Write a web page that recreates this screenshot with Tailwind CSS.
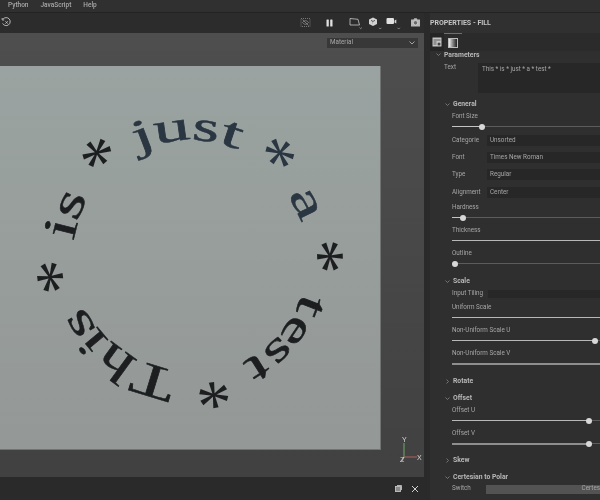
<!DOCTYPE html>
<html lang="en">
<head>
    <meta charset="UTF-8">
    <title>Properties - Fill</title>
    <script src="https://cdn.jsdelivr.net/npm/@tailwindcss/browser@4"></script>
</head>
<body class="w-[600px] h-[500px] overflow-hidden bg-[#2b2b2b] blur-[0.4px] font-['Roboto',sans-serif] text-[#b4b4b4]">

    <!-- Menu bar -->
    <div class="h-[13px] bg-[#303030] border-b border-[#232323] flex items-center gap-[12px] pl-[8px] text-[6.500px] text-[#a8a8a8] font-medium">
        <span>Python</span>
        <span>JavaScript</span>
        <span>Help</span>
    </div>

    <div class="flex h-[487px]">
        <!-- Viewport column -->
        <div class="w-[424px] flex flex-col shrink-0">
            <div class="h-[20px] bg-[#2c2c2c] flex items-center relative shrink-0">
                <svg class="absolute left-[1px] top-[4px]" width="11" height="11" viewBox="0 0 11 11" fill="none" stroke="#c4c4c4" stroke-width="0.9">
                    <path d="M2 2.2A4 4 0 1 1 1.6 6.4"/><path d="M1.2 1v2h2"/><path d="M4.5 4.3l2.2 2.3M6.7 4.3l-2.2 2.3"/>
                </svg>
                <svg class="absolute left-[300px] top-[4px]" width="11" height="11" viewBox="0 0 11 11" fill="none" stroke="#8a8a8a" stroke-width="0.8">
                    <rect x="1" y="1.5" width="9" height="8" stroke-dasharray="1 1"/><path d="M2.5 5.5c2-2.4 4-2.4 6 0-2 2.400-4 2.400-6 0zM2.500 2.500l6 6"/>
                </svg>
                <svg class="absolute left-[326px] top-[6px]" width="7" height="8" viewBox="0 0 7 8" fill="#e0e0e0">
                    <rect x="0.500" y="0.500" width="2.300" height="7" rx="0.500"/><rect x="4.200" y="0.500" width="2.300" height="7" rx="0.500"/>
                </svg>
                <svg class="absolute left-[349px] top-[4px]" width="14" height="13" viewBox="0 0 14 13" fill="none" stroke="#c8c8c8" stroke-width="0.8">
                    <path d="M1 1.500l8 .8 1.500 5.700H1z"/><path d="M10.500 10.500l1.200 1.200 1.200-1.200" stroke="#9a9a9a"/>
                </svg>
                <svg class="absolute left-[368px] top-[3px]" width="15" height="14" viewBox="0 0 15 14">
                    <path d="M1 3.500L5 1.500l4 2v4.500l-4 2-4-2z" fill="#d2d2d2"/><path d="M3 4l2 1 2-1v.800l-2 1v2h-.200v-2l-1.800-1z" fill="#3a3a3a"/><path d="M11 11.800l1.200 1.200 1.200-1.200" fill="none" stroke="#9a9a9a" stroke-width="0.800"/>
                </svg>
                <svg class="absolute left-[386px] top-[3px]" width="16" height="14" viewBox="0 0 16 14">
                    <rect x="0.500" y="2" width="7.500" height="6" rx="1" fill="#e0e0e0"/><path d="M8.500 4.500l1.800-1v4l-1.800-1z" fill="#d0d0d0"/><path d="M11.500 11.800l1.200 1.200 1.200-1.200" fill="none" stroke="#9a9a9a" stroke-width="0.800"/>
                </svg>
                <svg class="absolute left-[410px] top-[4px]" width="11" height="11" viewBox="0 0 11 11">
                    <path d="M1 2.500h2.500l.8-1.200h2.400l.8 1.200H10v7H1z" fill="#b8b8b8"/><circle cx="5.500" cy="5.800" r="2.200" fill="#6a6a6a" stroke="#e0e0e0" stroke-width="0.700"/>
                </svg>
            </div>

            <!-- Viewport -->
            <div class="h-[444px] bg-gradient-to-b from-[#4e4e4e] to-[#414141] relative shrink-0 overflow-hidden">
                <div class="absolute left-[327px] top-[5px] w-[91px] h-[10px] bg-[#383838] flex items-center justify-between pl-[3px] pr-[3px] text-[6.300px] text-[#a8a8a8]">
                    <span>Material</span>
                    <svg width="6" height="4" viewBox="0 0 6 4" fill="none" stroke="#c0c0c0" stroke-width="0.800"><path d="M.5.500l2.500 2.500L5.500.500"/></svg>
                </div>

                <!-- Canvas with lettering on a circle -->
                <div class="absolute left-0 top-[33px] w-[381px] h-[384px] bg-gradient-to-b from-[#9aa3a1] to-[#949896] border-b border-r border-[#707371]"></div>
                <svg class="absolute left-0 top-0" width="424" height="444" viewBox="0 33 424 444" font-family="'Liberation Serif', serif" font-size="43" stroke-width="0.500">
                    <g fill="#2a3641" stroke="#2a3641">
                        <text text-anchor="middle" transform="translate(190 260) rotate(-21) translate(0 -120) scale(1.7 1)">j</text>
                        <text text-anchor="middle" transform="translate(190 260) rotate(-8) translate(0 -120) scale(1.7 1)">u</text>
                        <text text-anchor="middle" transform="translate(190 260) rotate(7) translate(0 -120) scale(1.6 1)">s</text>
                        <text text-anchor="middle" transform="translate(190 260) rotate(18.500) translate(0 -120) scale(1.8 1)">t</text>
                        <text text-anchor="middle" font-size="70" stroke="none" transform="translate(190 260) rotate(40) translate(0 -107)">*</text>
                        <text text-anchor="middle" font-size="46" transform="translate(190 260) rotate(64) translate(0 -117) scale(1.55 1)">a</text>
                    </g>
                    <g fill="#1c1e20" stroke="#1c1e20">
                        <text text-anchor="middle" font-size="70" stroke="none" transform="translate(190 260) rotate(88.500) translate(0 -107)">*</text>
                        <text text-anchor="middle" transform="translate(190 260) rotate(111) translate(0 -117) scale(1.7 1)">t</text>
                        <text text-anchor="middle" transform="translate(190 260) rotate(124) translate(0 -116) scale(1.5 1)">e</text>
                        <text text-anchor="middle" transform="translate(190 260) rotate(136) translate(0 -116) scale(1.5 1)">s</text>
                        <text text-anchor="middle" transform="translate(190 260) rotate(148) translate(0 -115) scale(1.7 1)">t</text>
                        <text text-anchor="middle" font-size="70" stroke="none" transform="translate(190 260) rotate(170) translate(0 -104)">*</text>
                        <text text-anchor="middle" font-size="48" transform="translate(190 260) rotate(197) translate(0 -111) scale(1.5 1)">T</text>
                        <text text-anchor="middle" font-size="47" transform="translate(190 260) rotate(216) translate(0 -112) scale(1.45 1)">h</text>
                        <text text-anchor="middle" font-size="44" transform="translate(190 260) rotate(230) translate(0 -114) scale(1.6 1)">i</text>
                        <text text-anchor="middle" font-size="44" transform="translate(190 260) rotate(240) translate(0 -116) scale(1.6 1)">s</text>
                        <text text-anchor="middle" font-size="70" stroke="none" transform="translate(190 260) rotate(263) translate(0 -108)">*</text>
                        <text text-anchor="middle" font-size="47" transform="translate(190 260) rotate(284) translate(0 -118) scale(1.5 1)">i</text>
                        <text text-anchor="middle" font-size="47" transform="translate(190 260) rotate(295) translate(0 -119) scale(1.5 1)">s</text>
                        <text text-anchor="middle" font-size="70" stroke="none" transform="translate(190 260) rotate(319) translate(0 -109)">*</text>
                    </g>
                </svg>

                <!-- Axis gizmo -->
                <svg class="absolute left-[395px] top-[401px]" width="28" height="30" viewBox="0 0 28 30" font-family="'Liberation Sans', sans-serif" font-size="7" fill="#d8d8d8">
                    <path d="M9 9v14" stroke="#6fa869" stroke-width="1"/>
                    <path d="M9 23h13" stroke="#b06060" stroke-width="1"/>
                    <path d="M9 23l-2 4" stroke="#c8c8c8" stroke-width="0.800"/>
                    <text x="7" y="8">Y</text>
                    <text x="22" y="26">X</text>
                    <text x="5" y="28">Z</text>
                </svg>
            </div>

            <!-- Bottom bar -->
            <div class="h-[23px] bg-[#2a2a2a] flex items-center justify-end gap-[9px] pr-[5px] shrink-0">
                <svg width="7" height="7" viewBox="0 0 7 7" fill="none" stroke="#c4c4c4" stroke-width="0.900"><rect x="0.500" y="1.500" width="5" height="5" fill="#8a8a8a"/><path d="M2 .500h4.500V5"/></svg>
                <svg width="8" height="8" viewBox="0 0 8 8" fill="none" stroke="#d0d0d0" stroke-width="1"><path d="M1 1l6 6M7 1L1 7"/></svg>
            </div>
        </div>

        <!-- Gutter -->
        <div class="w-[6px] bg-[#2a2a2a] shrink-0"></div>

        <!-- Properties panel -->
        <div class="w-[170px] shrink-0 bg-[#2f2f2f] flex flex-col text-[6.300px] text-[#a6a6a6] overflow-hidden">
            <div class="h-[20px] flex items-center bg-[#303030] text-[7px] font-bold text-[#c4c4c4] shrink-0">PROPERTIES - FILL</div>
            <div class="h-[18px] flex items-start bg-[#2b2b2b] shrink-0">
                <div class="w-[14px] h-[18px] bg-[#252525] flex items-center justify-center">
                    <svg width="10" height="10" viewBox="0 0 10 10"><rect x="0.500" y="0.500" width="9" height="9" fill="#c4c4c4"/><path d="M1.500 3h7M1.500 5h3M1.500 7h3" stroke="#444" stroke-width="0.800"/><circle cx="7" cy="7" r="1.500" fill="#444"/></svg>
                </div>
                <div class="w-[18px] h-[18px] border-t border-[#2c7fd0] flex items-center justify-center">
                    <div class="w-[10px] h-[10px] bg-gradient-to-r from-[#f0f0f0] to-[#222] border border-[#bbb]"></div>
                </div>
            </div>

            <!-- Parameters -->
            <div class="h-[10px] mt-[-1px] flex items-center pl-[6px] gap-[3px] text-[6.800px] font-bold text-[#b8b8b8] shrink-0">
                <svg width="5" height="4" viewBox="0 0 5 4" fill="none" stroke="#909090" stroke-width="0.700"><path d="M.5.500l2 2 2-2"/></svg>
                <span>Parameters</span>
            </div>
            <div class="h-[31px] flex pl-[14px] shrink-0 mt-[3px]">
                <span class="w-[34px]">Text</span>
                <div class="flex-1 h-[30px] bg-[#272727] pl-[4px] pt-[2px]">This * is * just * a * test *</div>
            </div>

            <!-- General -->
            <div class="h-[11px] mt-[5px] flex items-center pl-[15px] gap-[3px] text-[6.800px] font-bold text-[#b8b8b8] shrink-0">
                <svg width="5" height="4" viewBox="0 0 5 4" fill="none" stroke="#909090" stroke-width="0.700"><path d="M.5.500l2 2 2-2"/></svg>
                <span>General</span>
            </div>
            <div class="h-[11px] pl-[22px] flex items-center mt-[1px] shrink-0">Font Size</div>
            <div class="h-[9px] ml-[22px] relative flex items-center shrink-0">
                <div class="h-px w-full bg-[#5c5c5c]"></div>
                <div class="absolute left-0 w-[30px] h-px bg-[#c4c4c4]"></div>
                <div class="absolute left-[27px] w-[6px] h-[6px] rounded-full bg-[#d8d8d8]"></div>
            </div>

            <div class="h-[11px] mt-[4px] flex items-center pl-[22px] shrink-0"><span class="w-[35px]">Categorie</span><div class="flex-1 h-[11px] bg-[#272727] flex items-center pl-[3px]">Unsorted</div></div>
            <div class="h-[11px] mt-[6px] flex items-center pl-[22px] shrink-0"><span class="w-[35px]">Font</span><div class="flex-1 h-[11px] bg-[#272727] flex items-center pl-[3px]">Times New Roman</div></div>
            <div class="h-[11px] mt-[6px] flex items-center pl-[22px] shrink-0"><span class="w-[35px]">Type</span><div class="flex-1 h-[11px] bg-[#272727] flex items-center pl-[3px]">Regular</div></div>
            <div class="h-[11px] mt-[7px] flex items-center pl-[22px] shrink-0"><span class="w-[35px]">Alignment</span><div class="flex-1 h-[11px] bg-[#272727] flex items-center pl-[3px]">Center</div></div>

            <div class="h-[11px] pl-[22px] flex items-center mt-[4px] shrink-0">Hardness</div>
            <div class="h-[9px] ml-[22px] relative flex items-center shrink-0">
                <div class="h-px w-full bg-[#5c5c5c]"></div>
                <div class="absolute left-0 w-[11px] h-px bg-[#c4c4c4]"></div>
                <div class="absolute left-[8px] w-[6px] h-[6px] rounded-full bg-[#d8d8d8]"></div>
            </div>
            <div class="h-[11px] pl-[22px] flex items-center mt-[3px] shrink-0">Thickness</div>
            <div class="h-[9px] ml-[22px] relative flex items-center shrink-0">
                <div class="h-px w-full bg-[#b8b8b8]"></div>
            </div>
            <div class="h-[11px] pl-[22px] flex items-center mt-[3px] shrink-0">Outline</div>
            <div class="h-[9px] ml-[22px] relative flex items-center shrink-0">
                <div class="h-px w-full bg-[#5c5c5c]"></div>
                <div class="absolute left-0 w-[6px] h-[6px] rounded-full bg-[#d8d8d8]"></div>
            </div>

            <!-- Scale -->
            <div class="h-[11px] mt-[8px] flex items-center pl-[15px] gap-[3px] text-[6.800px] font-bold text-[#b8b8b8] shrink-0">
                <svg width="5" height="4" viewBox="0 0 5 4" fill="none" stroke="#909090" stroke-width="0.700"><path d="M.5.500l2 2 2-2"/></svg>
                <span>Scale</span>
            </div>
            <div class="h-[9px] mt-[2px] flex items-center pl-[22px] shrink-0"><span class="w-[36px] whitespace-nowrap">Input Tiling</span><div class="flex-1 h-[8px] bg-[#272727]"></div></div>
            <div class="h-[11px] pl-[22px] flex items-center mt-[4px] shrink-0">Uniform Scale</div>
            <div class="h-[9px] ml-[22px] relative flex items-center shrink-0">
                <div class="h-px w-full bg-[#b8b8b8]"></div>
            </div>
            <div class="h-[11px] pl-[22px] flex items-center mt-[3px] shrink-0">Non-Uniform Scale U</div>
            <div class="h-[9px] ml-[22px] relative flex items-center shrink-0">
                <div class="h-px w-full bg-[#5c5c5c]"></div>
                <div class="absolute left-0 w-[143px] h-px bg-[#b8b8b8]"></div>
                <div class="absolute left-[140px] w-[6px] h-[6px] rounded-full bg-[#d8d8d8]"></div>
            </div>
            <div class="h-[11px] pl-[22px] flex items-center mt-[3px] shrink-0">Non-Uniform Scale V</div>
            <div class="h-[9px] ml-[22px] relative flex items-center shrink-0">
                <div class="h-[2px] w-full bg-[#8e8e8e]"></div>
            </div>

            <!-- Rotate -->
            <div class="h-[11px] mt-[8px] flex items-center pl-[16px] gap-[3px] text-[6.800px] font-bold text-[#b8b8b8] shrink-0">
                <svg width="4" height="5" viewBox="0 0 4 5" fill="none" stroke="#909090" stroke-width="0.700"><path d="M.5.500l2 2-2 2"/></svg>
                <span>Rotate</span>
            </div>

            <!-- Offset -->
            <div class="h-[11px] mt-[6px] flex items-center pl-[15px] gap-[3px] text-[6.800px] font-bold text-[#b8b8b8] shrink-0">
                <svg width="5" height="4" viewBox="0 0 5 4" fill="none" stroke="#909090" stroke-width="0.700"><path d="M.5.500l2 2 2-2"/></svg>
                <span>Offset</span>
            </div>
            <div class="h-[11px] pl-[22px] flex items-center mt-[1px] shrink-0">Offset U</div>
            <div class="h-[9px] ml-[22px] relative flex items-center shrink-0">
                <div class="h-px w-full bg-[#5c5c5c]"></div>
                <div class="absolute left-0 w-[137px] h-px bg-[#b8b8b8]"></div>
                <div class="absolute left-[134px] w-[6px] h-[6px] rounded-full bg-[#d8d8d8]"></div>
            </div>
            <div class="h-[11px] pl-[22px] flex items-center mt-[3px] shrink-0">Offset V</div>
            <div class="h-[9px] ml-[22px] relative flex items-center shrink-0">
                <div class="h-px w-full bg-[#5c5c5c]"></div>
                <div class="absolute left-0 w-[137px] h-[2px] bg-[#8e8e8e]"></div>
                <div class="absolute left-[134px] w-[6px] h-[6px] rounded-full bg-[#d8d8d8]"></div>
            </div>

            <!-- Skew -->
            <div class="h-[11px] mt-[7px] flex items-center pl-[16px] gap-[3px] text-[6.800px] font-bold text-[#b8b8b8] shrink-0">
                <svg width="4" height="5" viewBox="0 0 4 5" fill="none" stroke="#909090" stroke-width="0.700"><path d="M.5.500l2 2-2 2"/></svg>
                <span>Skew</span>
            </div>

            <!-- Certesian to Polar -->
            <div class="h-[11px] mt-[6px] flex items-center pl-[15px] gap-[3px] text-[6.800px] font-bold text-[#b8b8b8] shrink-0">
                <svg width="5" height="4" viewBox="0 0 5 4" fill="none" stroke="#909090" stroke-width="0.700"><path d="M.5.500l2 2 2-2"/></svg>
                <span>Certesian to Polar</span>
            </div>
            <div class="h-[10px] mt-[1px] flex items-center pl-[22px] shrink-0"><span class="w-[34px] shrink-0">Switch</span><div class="w-[218px] shrink-0 h-[9px] bg-[#535353] flex items-center justify-center">Certesian</div></div>
        </div>
    </div>
</body>
</html>
